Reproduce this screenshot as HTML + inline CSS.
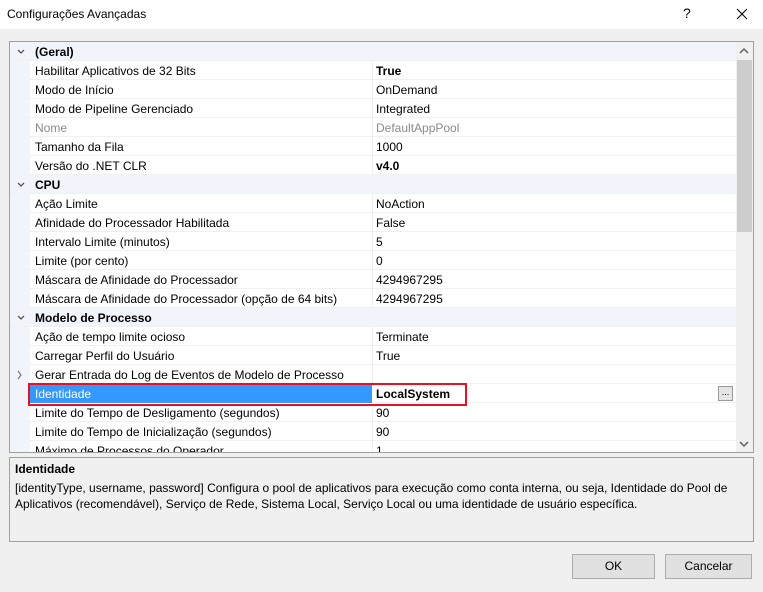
<!DOCTYPE html>
<html><head><meta charset="utf-8"><style>
*{margin:0;padding:0;box-sizing:border-box}
body{width:763px;height:592px;background:#f0f0f0;font-family:"Liberation Sans",sans-serif;font-size:12px;color:#000;position:relative;overflow:hidden}
.abs{position:absolute}
.title{left:0;top:0;width:763px;height:29px;background:#fff}
.grid{left:9px;top:41px;width:745px;height:412px;border:1px solid #a0a0a0;background:#fff;overflow:hidden}
.row{position:absolute;left:0;width:726px;height:19px;border-bottom:1px solid #f0f0f0}
.row .n{position:absolute;left:25px;top:3px;white-space:nowrap}
.row .v{position:absolute;left:366px;top:3px;white-space:nowrap}
.row .d{position:absolute;left:362px;top:0;width:1px;height:19px;background:#f0f0f0}
.cat{background:#f1f5fb}
.cat .n{font-weight:bold}
.gut{position:absolute;left:0;top:0;width:20px;height:412px;background:#f1f5fb}
.chev{position:absolute;left:6px;top:6px}
.desc{left:9px;top:457px;width:745px;height:85px;border:1px solid #a0a0a0;background:#f0f0f0}
.btn{height:25px;border:1px solid #adadad;background:#e1e1e1;text-align:center;line-height:23px}
</style></head><body>
<div class="abs title"></div>
<div class="abs" style="left:7px;top:7px">Configurações Avançadas</div>
<div class="abs" style="left:683px;top:5px;font-size:14px">?</div>
<svg class="abs" style="left:736px;top:8px" width="12" height="12"><path d="M1 1L11 11M11 1L1 11" stroke="#000" stroke-width="1.1"/></svg>
<div class="abs grid">
<div class="gut"></div>
<div class="row cat" style="top:0"><svg class="chev" width="10" height="8"><path d="M2 2L5 5L8 2" stroke="#555" stroke-width="1.3" fill="none"/></svg><span class="n">(Geral)</span></div>
<div class="row" style="top:19px;left:20px;width:706px"><span class="n" style="left:5px">Habilitar Aplicativos de 32 Bits</span><span class="d" style="left:342px"></span><span class="v" style="left:346px;font-weight:bold">True</span></div>
<div class="row" style="top:38px;left:20px;width:706px"><span class="n" style="left:5px">Modo de Início</span><span class="d" style="left:342px"></span><span class="v" style="left:346px">OnDemand</span></div>
<div class="row" style="top:57px;left:20px;width:706px"><span class="n" style="left:5px">Modo de Pipeline Gerenciado</span><span class="d" style="left:342px"></span><span class="v" style="left:346px">Integrated</span></div>
<div class="row" style="top:76px;left:20px;width:706px;color:#8a8a8a"><span class="n" style="left:5px">Nome</span><span class="d" style="left:342px"></span><span class="v" style="left:346px">DefaultAppPool</span></div>
<div class="row" style="top:95px;left:20px;width:706px"><span class="n" style="left:5px">Tamanho da Fila</span><span class="d" style="left:342px"></span><span class="v" style="left:346px">1000</span></div>
<div class="row" style="top:114px;left:20px;width:706px"><span class="n" style="left:5px">Versão do .NET CLR</span><span class="d" style="left:342px"></span><span class="v" style="left:346px;font-weight:bold">v4.0</span></div>
<div class="row cat" style="top:133px"><svg class="chev" width="10" height="8"><path d="M2 2L5 5L8 2" stroke="#555" stroke-width="1.3" fill="none"/></svg><span class="n">CPU</span></div>
<div class="row" style="top:152px;left:20px;width:706px"><span class="n" style="left:5px">Ação Limite</span><span class="d" style="left:342px"></span><span class="v" style="left:346px">NoAction</span></div>
<div class="row" style="top:171px;left:20px;width:706px"><span class="n" style="left:5px">Afinidade do Processador Habilitada</span><span class="d" style="left:342px"></span><span class="v" style="left:346px">False</span></div>
<div class="row" style="top:190px;left:20px;width:706px"><span class="n" style="left:5px">Intervalo Limite (minutos)</span><span class="d" style="left:342px"></span><span class="v" style="left:346px">5</span></div>
<div class="row" style="top:209px;left:20px;width:706px"><span class="n" style="left:5px">Limite (por cento)</span><span class="d" style="left:342px"></span><span class="v" style="left:346px">0</span></div>
<div class="row" style="top:228px;left:20px;width:706px"><span class="n" style="left:5px">Máscara de Afinidade do Processador</span><span class="d" style="left:342px"></span><span class="v" style="left:346px">4294967295</span></div>
<div class="row" style="top:247px;left:20px;width:706px"><span class="n" style="left:5px">Máscara de Afinidade do Processador (opção de 64 bits)</span><span class="d" style="left:342px"></span><span class="v" style="left:346px">4294967295</span></div>
<div class="row cat" style="top:266px"><svg class="chev" width="10" height="8"><path d="M2 2L5 5L8 2" stroke="#555" stroke-width="1.3" fill="none"/></svg><span class="n">Modelo de Processo</span></div>
<div class="row" style="top:285px;left:20px;width:706px"><span class="n" style="left:5px">Ação de tempo limite ocioso</span><span class="d" style="left:342px"></span><span class="v" style="left:346px">Terminate</span></div>
<div class="row" style="top:304px;left:20px;width:706px"><span class="n" style="left:5px">Carregar Perfil do Usuário</span><span class="d" style="left:342px"></span><span class="v" style="left:346px">True</span></div>
<div class="row" style="top:323px;left:20px;width:706px"><span class="n" style="left:5px">Gerar Entrada do Log de Eventos de Modelo de Processo</span><span class="d" style="left:342px"></span></div>
<svg class="abs" style="left:6px;top:328px" width="8" height="10"><path d="M2 1L5 5L2 9" stroke="#777" stroke-width="1.2" fill="none"/></svg>
<div class="row" style="top:342px;left:20px;width:706px"><div style="position:absolute;left:0;top:0;width:342px;height:19px;background:#3399ff"></div><span class="n" style="left:5px;color:#fff">Identidade</span><span class="v" style="left:346px;font-weight:bold">LocalSystem</span>
<div style="position:absolute;left:688px;top:2px;width:15px;height:15px;border:1px solid #999;background:#e5e5e5;font-size:9px;text-align:center;line-height:10px">...</div></div>
<div class="row" style="top:361px;left:20px;width:706px"><span class="n" style="left:5px">Limite do Tempo de Desligamento (segundos)</span><span class="d" style="left:342px"></span><span class="v" style="left:346px">90</span></div>
<div class="row" style="top:380px;left:20px;width:706px"><span class="n" style="left:5px">Limite do Tempo de Inicialização (segundos)</span><span class="d" style="left:342px"></span><span class="v" style="left:346px">90</span></div>
<div class="row" style="top:399px;left:20px;width:706px"><span class="n" style="left:5px">Máximo de Processos do Operador</span><span class="d" style="left:342px"></span><span class="v" style="left:346px">1</span></div>
<div style="position:absolute;left:726px;top:0;width:17px;height:410px;background:#f0f0f0"></div>
<div style="position:absolute;left:727px;top:18px;width:15px;height:172px;background:#cdcdcd"></div>
<svg style="position:absolute;left:729px;top:5px" width="10" height="8"><path d="M1 6L5 2L9 6" stroke="#606060" stroke-width="1.5" fill="none"/></svg>
<svg style="position:absolute;left:729px;top:398px" width="10" height="8"><path d="M1 2L5 6L9 2" stroke="#606060" stroke-width="1.5" fill="none"/></svg>
</div>
<div class="abs" style="left:28px;top:383px;width:439px;height:23px;border:2px solid #e81123"></div>
<div class="abs desc">
<div style="position:absolute;left:5px;top:4px;font-weight:bold">Identidade</div>
<div style="position:absolute;left:5px;top:22px;width:730px;line-height:16px">[identityType, username, password] Configura o pool de aplicativos para execução como conta interna, ou seja, Identidade do Pool de Aplicativos (recomendável), Serviço de Rede, Sistema Local, Serviço Local ou uma identidade de usuário específica.</div>
</div>
<div class="abs btn" style="left:572px;top:554px;width:83px">OK</div>
<div class="abs btn" style="left:665px;top:554px;width:87px">Cancelar</div>
</body></html>
